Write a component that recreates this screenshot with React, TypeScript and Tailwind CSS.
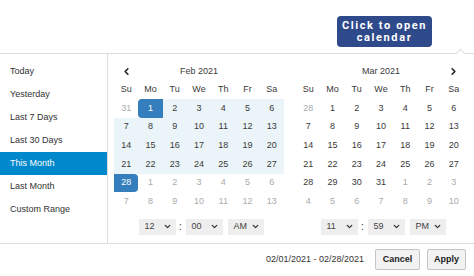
import { ChevronDown, ChevronLeft, ChevronRight } from "lucide-react";

type Day = { d: number; off?: boolean; range?: boolean; start?: boolean; end?: boolean };

const ranges = ["Today", "Yesterday", "Last 7 Days", "Last 30 Days", "This Month", "Last Month", "Custom Range"];
const weekdays = ["Su", "Mo", "Tu", "We", "Th", "Fr", "Sa"];

// Feb 2021 with the whole month selected
const febDays: Day[] = [
  { d: 31, off: true },
  ...Array.from({ length: 28 }, (_, i) => ({
    d: i + 1,
    range: true,
    start: i === 0,
    end: i === 27,
  })),
  ...Array.from({ length: 13 }, (_, i) => ({ d: i + 1, off: true })),
];

const marDays: Day[] = [
  { d: 28, off: true },
  ...Array.from({ length: 31 }, (_, i) => ({ d: i + 1 })),
  ...Array.from({ length: 10 }, (_, i) => ({ d: i + 1, off: true })),
];

function TimeSelect({ value, width }: { value: string; width: string }) {
  return (
    <div className={`${width} h-[16px] bg-[#eeeeee] flex items-center justify-between pl-[6px] pr-[4px] text-[9px] text-[#444]`}>
      <span>{value}</span>
      <ChevronDown size={9} strokeWidth={3.5} className="text-[#333]" />
    </div>
  );
}

function Calendar({ title, days, prev, next, time }: { title: string; days: Day[]; prev?: boolean; next?: boolean; time: string[] }) {
  return (
    <div className="w-[182px] px-[6px] pt-[8px]">
      <div className="grid grid-cols-7 w-[170px] text-[9px] text-[#3a3a3a]">
        <div className="h-[18.6px] flex items-center justify-center">
          {prev && <ChevronLeft size={11} strokeWidth={3.5} className="text-[#222]" />}
        </div>
        <div className="col-span-5 h-[18.6px] flex items-center justify-center">{title}</div>
        <div className="h-[18.6px] flex items-center justify-center">
          {next && <ChevronRight size={11} strokeWidth={3.5} className="text-[#222]" />}
        </div>
        {weekdays.map((w) => (
          <div key={w} className="h-[18.6px] flex items-center justify-center">
            {w}
          </div>
        ))}
        {days.map((day, i) => {
          let cls = "h-[18.6px] flex items-center justify-center ";
          if (day.start) cls += "bg-[#357ebd] text-white rounded-l-[4px]";
          else if (day.end) cls += "bg-[#357ebd] text-white rounded-r-[4px]";
          else if (day.range) cls += "bg-[#ebf4f8]";
          else if (day.off) cls += "text-[#aaa]";
          return (
            <div key={i} className={cls}>
              {day.d}
            </div>
          );
        })}
      </div>
      <div className="flex items-center justify-center mt-[8px] pl-[4px] text-[#333]">
        <TimeSelect value={time[0]} width="w-[37px]" />
        <span className="w-[10px] text-center text-[10px]">:</span>
        <TimeSelect value={time[1]} width="w-[37px]" />
        <div className="w-[5px]" />
        <TimeSelect value={time[2]} width="w-[36px]" />
      </div>
    </div>
  );
}

export default function App() {
  return (
    <div className="w-[474px] h-[276px] bg-white overflow-hidden relative font-['Liberation_Sans',Arial,sans-serif]">
      <div className="h-[53px] flex justify-end items-start pt-[16px] pr-[42px]">
        <div className="w-[95px] h-[31px] rounded-[4px] bg-[#2f4a8b] text-white font-bold text-[11px] leading-[12px] tracking-[1.6px] flex flex-col items-center justify-center font-['Roboto',sans-serif]">
          <span>Click to open</span>
          <span>calendar</span>
        </div>
      </div>

      <div className="relative border-t border-[#dddddd]">
        <div className="absolute -top-[4px] right-[10px] w-[7px] h-[7px] bg-white border-t border-l border-[#dddddd] rotate-45" />
        <div className="flex h-[189px]">
          <div className="w-[108px] border-r border-[#dddddd] pt-[6px]">
            {ranges.map((r) => (
              <div
                key={r}
                className={`h-[23px] pl-[10px] flex items-center text-[9px] ${
                  r === "This Month" ? "bg-[#0088cc] text-white" : "text-[#333]"
                }`}
              >
                {r}
              </div>
            ))}
          </div>
          <Calendar title="Feb 2021" days={febDays} prev time={["12", "00", "AM"]} />
          <Calendar title="Mar 2021" days={marDays} next time={["11", "59", "PM"]} />
        </div>
        <div className="border-t border-[#dddddd] flex items-center justify-end pt-[5px] pr-[8px] text-[9px] text-[#333]">
          <span className="mr-[11px]">02/01/2021 - 02/28/2021</span>
          <button className="w-[45px] h-[21px] border border-[#c4c4c4] rounded-[2px] bg-[#f2f2f2] font-bold text-[9px] text-[#222] mr-[7px]">
            Cancel
          </button>
          <button className="w-[39px] h-[21px] border border-[#c4c4c4] rounded-[2px] bg-[#f2f2f2] font-bold text-[9px] text-[#222]">
            Apply
          </button>
        </div>
      </div>
    </div>
  );
}
